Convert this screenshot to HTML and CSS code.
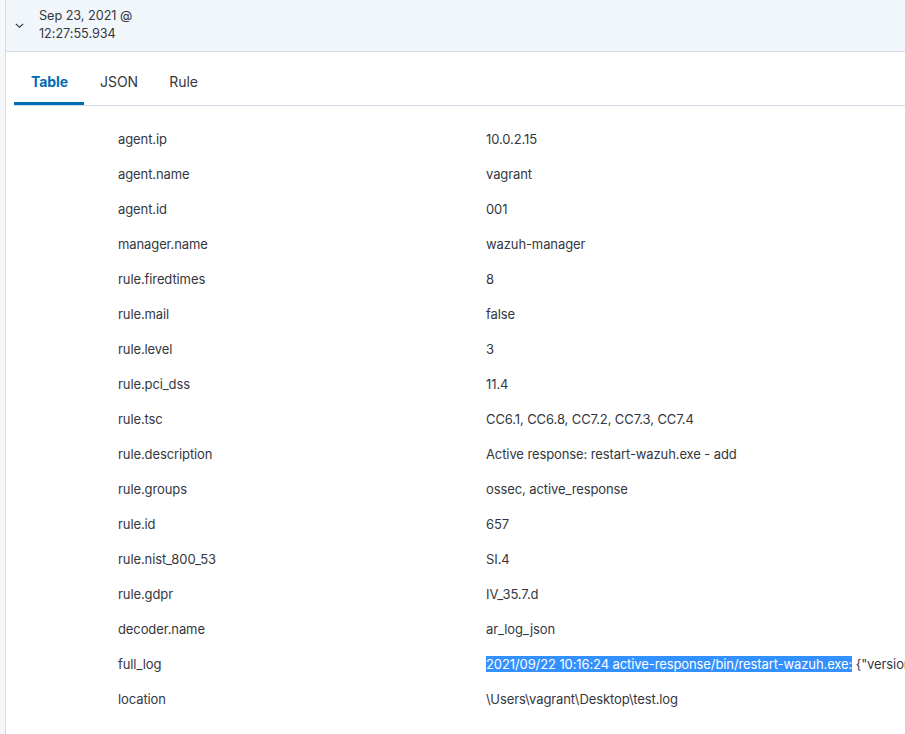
FILE: index.html
```html
<!DOCTYPE html>
<html>
<head>
<meta charset="utf-8">
<link rel="stylesheet" href="styles.css">
</head>
<body>
<div class="page">
  <div class="gutter"></div>
  <div class="main">
    <div class="doc-header">
      <svg class="chevron" width="9" height="5" viewBox="0 0 9 5"><path d="M0.8 0.8 L4.5 4.2 L8.2 0.8" fill="none" stroke="#343741" stroke-width="1.1"/></svg>
      <div class="timestamp">Sep 23, 2021 @<br>12:27:55.934</div>
    </div>
    <div class="tabs">
      <div class="tab active">Table</div>
      <div class="tab">JSON</div>
      <div class="tab">Rule</div>
    </div>
    <div class="fields">
      <div class="row"><div class="key">agent.ip</div><div class="val">10.0.2.15</div></div>
      <div class="row"><div class="key">agent.name</div><div class="val">vagrant</div></div>
      <div class="row"><div class="key">agent.id</div><div class="val">001</div></div>
      <div class="row"><div class="key">manager.name</div><div class="val">wazuh-manager</div></div>
      <div class="row"><div class="key">rule.firedtimes</div><div class="val">8</div></div>
      <div class="row"><div class="key">rule.mail</div><div class="val">false</div></div>
      <div class="row"><div class="key">rule.level</div><div class="val">3</div></div>
      <div class="row"><div class="key">rule.pci_dss</div><div class="val">11.4</div></div>
      <div class="row"><div class="key">rule.tsc</div><div class="val">CC6.1, CC6.8, CC7.2, CC7.3, CC7.4</div></div>
      <div class="row"><div class="key">rule.description</div><div class="val">Active response: restart-wazuh.exe - add</div></div>
      <div class="row"><div class="key">rule.groups</div><div class="val">ossec, active_response</div></div>
      <div class="row"><div class="key">rule.id</div><div class="val">657</div></div>
      <div class="row"><div class="key">rule.nist_800_53</div><div class="val">SI.4</div></div>
      <div class="row"><div class="key">rule.gdpr</div><div class="val">IV_35.7.d</div></div>
      <div class="row"><div class="key">decoder.name</div><div class="val">ar_log_json</div></div>
      <div class="row"><div class="key">full_log</div><div class="val"><span class="sel">2021/09/22 10:16:24 active-response/bin/restart-wazuh.exe:</span> {"version</div></div>
      <div class="row"><div class="key">location</div><div class="val">\Users\vagrant\Desktop\test.log</div></div>
    </div>
  </div>
</div>
</body>
</html>
```

FILE: styles.css
```css
html, body {
  margin: 0;
  padding: 0;
  background: #ffffff;
  overflow: hidden;
}
body {
  font-family: "Inter", "Noto Sans", sans-serif;
  color: #343741;
  width: 905px;
  height: 734px;
}
.page {
  display: flex;
  height: 734px;
}
.gutter {
  width: 5px;
  flex: none;
  background: #f5f7fa;
  border-right: 1px solid #d3dae6;
}
.main {
  flex: 1;
  min-width: 0;
  overflow: hidden;
}
.doc-header {
  height: 52px;
  box-sizing: border-box;
  background: #f1f6fb;
  border-bottom: 1px solid #d3dae6;
  display: flex;
  align-items: center;
  padding-left: 9px;
  padding-bottom: 2px;
}
.chevron {
  flex: none;
  margin-top: 2px;
}
.timestamp {
  margin-left: 15px;
  font-size: 12.7px;
  line-height: 18px;
  letter-spacing: -0.05px;
}
.tabs {
  display: flex;
  margin-left: 8px;
  margin-top: 6px;
  border-bottom: 1px solid #d3dae6;
}
.tab {
  height: 47px;
  box-sizing: border-box;
  padding: 0 15px 0 16px;
  display: flex;
  align-items: center;
  font-size: 14px;
  color: #343741;
}
.tab.active {
  padding-left: 17px;
  padding-right: 16px;
  color: #006bb4;
  font-weight: 700;
  border-bottom: 3px solid #006bb4;
  padding-top: 3px;
  letter-spacing: -0.1px;
}
.fields {
  padding-top: 15px;
  padding-left: 112px;
}
.row {
  display: grid;
  grid-template-columns: 368px 1fr;
  height: 35px;
  align-items: center;
  font-size: 13px;
  letter-spacing: -0.1px;
}
.val {
  white-space: nowrap;
  overflow: hidden;
}
.sel {
  background: #3390ff;
  color: #ffffff;
  padding: 2px 0;
}
```
